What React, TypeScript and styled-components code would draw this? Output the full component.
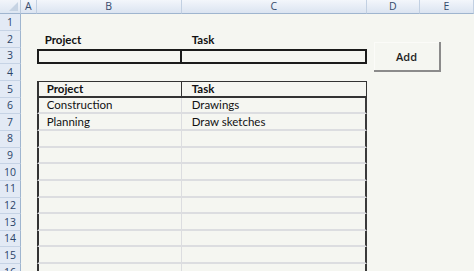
import React from "react";
import styled, { createGlobalStyle } from "styled-components";

const GlobalStyle = createGlobalStyle`
  html, body {
    margin: 0;
    padding: 0;
    background: #f5f6f1;
    overflow: hidden;
  }
  * { box-sizing: border-box; }
`;

const COLS = ["A", "B", "C", "D", "E"];
const ROW_COUNT = 16;

type Kind = "plain" | "input" | "head" | "data";

const tableRows: Record<number, [string, string]> = {
  5: ["Project", "Task"],
  6: ["Construction", "Drawings"],
  7: ["Planning", "Draw sketches"],
};

const kindOf = (row: number): Kind => {
  if (row === 3) return "input";
  if (row === 5) return "head";
  if (row > 5) return "data";
  return "plain";
};

export default function App() {
  return (
    <>
      <GlobalStyle />
      <Sheet>
        <Corner />
        {COLS.map((c) => (
          <ColHead key={c}>{c}</ColHead>
        ))}
        {Array.from({ length: ROW_COUNT }, (_, i) => i + 1).map((row) => {
          const kind = kindOf(row);
          const values =
            row === 2 ? ["Project", "Task"] : tableRows[row] ?? ["", ""];
          const bold = row === 2 || row === 5;
          return (
            <React.Fragment key={row}>
              <RowHead>{row}</RowHead>
              <Cell />
              <Cell $kind={kind} $side="left" $bold={bold}>
                {values[0]}
              </Cell>
              <Cell $kind={kind} $side="right" $bold={bold}>
                {values[1]}
              </Cell>
              <Cell />
              <Cell />
            </React.Fragment>
          );
        })}
        <AddButton type="button">Add</AddButton>
      </Sheet>
    </>
  );
}

const Sheet = styled.div`
  position: relative;
  display: grid;
  grid-template-columns: 21px 15.7px 145px 185px 53px 1fr;
  grid-template-rows: 14.3px repeat(16, 16.67px);
  width: 474px;
  height: 271px;
  overflow: hidden;
  font-family: Lato, "Liberation Sans", sans-serif;
  font-size: 11.5px;
  color: #111;
`;

const Corner = styled.div`
  position: relative;
  background: linear-gradient(#f2f5fa, #dde6f2);
  border-right: 1px solid #b9c9dc;
  border-bottom: 1px solid #9fb5cf;
  &::after {
    content: "";
    position: absolute;
    right: 2px;
    bottom: 2px;
    border-left: 9px solid transparent;
    border-bottom: 9px solid #c6d3e3;
  }
`;

const ColHead = styled.div`
  display: flex;
  align-items: center;
  justify-content: center;
  background: linear-gradient(#f3f6fb, #dbe4f1);
  border-right: 1px solid #c2d0e2;
  border-bottom: 1px solid #9fb5cf;
  color: #34496a;
  font-family: "Open Sans", "Liberation Sans", sans-serif;
  font-size: 10.5px;
  line-height: 1;
`;

const RowHead = styled.div`
  display: flex;
  align-items: center;
  justify-content: center;
  background: #e3eaf5;
  border-right: 1px solid #9fb5cf;
  border-bottom: 1px solid #c6d3e5;
  color: #2c4468;
  font-family: "Open Sans", "Liberation Sans", sans-serif;
  font-size: 10.5px;
  line-height: 1;
`;

const borders = (kind: Kind, side: "left" | "right") => {
  switch (kind) {
    case "input":
      return `
        border-top: 2px solid #1b1b1b;
        border-bottom: 2px solid #1b1b1b;
        border-left: ${side === "left" ? "2px solid #1b1b1b" : "none"};
        border-right: 2px solid #1b1b1b;
        margin-top: 1px;
      `;
    case "head":
      return `
        border-top: 1px solid #333;
        border-bottom: 2px solid #333;
        border-left: ${side === "left" ? "2px solid #333" : "none"};
        border-right: 1px solid #333;
      `;
    case "data":
      return `
        border-bottom: 2px solid #dcdde0;
        border-left: ${side === "left" ? "2px solid #333" : "none"};
        border-right: ${side === "left" ? "1px solid #dcdde0" : "2px solid #3a3a3a"};
      `;
    default:
      return "";
  }
};

const Cell = styled.div<{ $kind?: Kind; $side?: "left" | "right"; $bold?: boolean }>`
  display: flex;
  align-items: center;
  padding-left: ${({ $side }) => ($side === "left" ? "8px" : "10px")};
  white-space: nowrap;
  overflow: hidden;
  font-weight: ${({ $bold }) => ($bold ? 700 : 400)};
  ${({ $kind = "plain", $side = "left" }) => borders($kind, $side)}
`;

const AddButton = styled.button`
  position: absolute;
  left: 374px;
  top: 42px;
  width: 67px;
  height: 30px;
  padding: 0;
  background: #f5f6f1;
  border: none;
  border-right: 2px solid #8b8b8b;
  border-bottom: 2px solid #8b8b8b;
  box-shadow: inset 1px 1px 0 #fbfbf8;
  font-family: "Open Sans", "Liberation Sans", sans-serif;
  font-size: 11px;
  font-weight: 600;
  color: #1e1e1e;
`;
